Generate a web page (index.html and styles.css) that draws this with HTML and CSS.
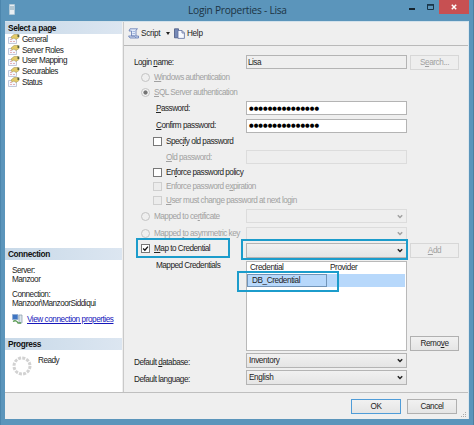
FILE: index.html
```html
<!DOCTYPE html>
<html lang="en">
<head>
<meta charset="utf-8">
<title>Login Properties - Lisa</title>
<link rel="stylesheet" href="styles.css">
</head>
<body>
<svg class="defs" width="0" height="0">
  <symbol id="page" viewBox="0 0 12 10"><path d="M.5 3.500h8v6h-8z" fill="#f5f8ff" stroke="#b4bbd2" stroke-width=".8"/><path d="M2 5.500h2M2 7.500h2M5 7.500h2" stroke="#dfa0a2" stroke-width=".8"/><path d="M3 3l3-2.500h4l1 3-3 2-2-1.500-2 1z" fill="#e3cb68" stroke="#9c8a48" stroke-width=".5"/><path d="M9.500 .5h1.800v2.500H9.500z" fill="#55603f"/></symbol>
  <symbol id="chev" viewBox="0 0 6 5"><path d="M.8 1.200L3 3.500 5.200 1.200" fill="none" stroke="currentColor" stroke-width="1.500"/></symbol>
</svg>
<div class="window">
  <header class="titlebar">
    <svg class="server" viewBox="0 0 6 11"><path d="M.5.5h5v10h-5z" fill="#e9eef2" stroke="#b8cbd8" stroke-width=".7"/><path d="M1 3h4M1 5h4" stroke="#7da1b5"/></svg>
    <h1>Login Properties - Lisa</h1>
    <svg class="min" viewBox="0 0 6 2"><path d="M0 1h6" stroke="#15242e" stroke-width="2"/></svg>
    <svg class="max" viewBox="0 0 7 6"><path d="M.5 1h6v4.500h-6z" fill="none" stroke="#183447"/><path d="M0 .8h7" stroke="#183447" stroke-width="1.500"/></svg>
    <div class="close"><svg viewBox="0 0 6 6"><path d="M.8.8l4.400 4.400M5.200.8L.8 5.200" stroke="#fff" stroke-width="1.500"/></svg></div>
  </header>
  <div class="client">
    <div class="body">
      <aside>
        <h2>Select a page</h2>
        <ul class="pages">
          <li><svg><use href="#page"/></svg><span>General</span></li>
          <li><svg><use href="#page"/></svg><span>Server Roles</span></li>
          <li><svg><use href="#page"/></svg><span>User Mapping</span></li>
          <li><svg><use href="#page"/></svg><span>Securables</span></li>
          <li><svg><use href="#page"/></svg><span>Status</span></li>
        </ul>
        <h2>Connection</h2>
        <div class="connection">
          <p>Server:<br>Manzoor</p>
          <p>Connection:<br><span class="account">Manzoor\ManzoorSiddiqui</span></p>
          <div class="link"><svg viewBox="0 0 11 10"><path d="M.5.5h5.500v5H.5z" fill="#3e75c3" stroke="#91aed4"/><path d="M7 1h3v8H7z" fill="#dce6ed" stroke="#8499a8" stroke-width=".7"/><path d="M1 7.500q3-2 5 1.500h3" fill="none" stroke="#5b9b55" stroke-width="1.300"/></svg><a>View connection properties</a></div>
        </div>
        <h2>Progress</h2>
        <div class="progress"><svg viewBox="0 0 20 20"><circle cx="10" cy="10" r="8" fill="none" stroke="#d2d2d2" stroke-width="3" stroke-dasharray="3 1.190"/></svg><span>Ready</span></div>
      </aside>
      <main>
        <div class="toolbar">
          <svg class="script" viewBox="0 0 11 11"><path d="M2 .8h7.500L8 2v6H3.500V3H1z" fill="#e4edfb" stroke="#6279b2" stroke-width=".8"/><path d="M.5 8h6l1.500 2h2.500V8H8M.5 8l1.500 2h6" fill="#c9d9f2" stroke="#6279b2" stroke-width=".8"/><path d="M4.500 3.500h2.500M4.500 5.500h2.500" stroke="#8ba4d5" stroke-width=".7"/></svg>
          <span class="t-script">Script</span><i class="caret"></i>
          <svg class="help" viewBox="0 0 11 11"><path d="M.5.800h4v9h-4z" fill="#7589b7" stroke="#475782" stroke-width=".8"/><path d="M4 2.500h4l2.400 2.400v5.500H4z" fill="#f7f9ff" stroke="#6070a0" stroke-width=".8"/><path d="M8 2.500V5h2.400" fill="none" stroke="#6070a0" stroke-width=".8"/></svg>
          <span>Help</span>
        </div>
        <form>
          <div class="row r-login"><label>Login <u>n</u>ame:</label><div class="field readonly">Lisa</div><div class="button off">S<u>e</u>arch...</div></div>
          <div class="row r-win off"><label class="in1"><i class="radio"></i><span><u>W</u>indows authentication</span></label></div>
          <div class="row r-sql off"><label class="in1"><i class="radio on"></i><span><u>S</u>QL Server authentication</span></label></div>
          <div class="row r-pass"><label class="in2"><u>P</u>assword:</label><div class="field dots">●●●●●●●●●●●●●●●</div></div>
          <div class="row r-confirm"><label class="in2"><u>C</u>onfirm password:</label><div class="field dots">●●●●●●●●●●●●●●●</div></div>
          <div class="row r-spec"><label class="in2c"><i class="check"></i><span>Spec<u>i</u>fy old password</span></label></div>
          <div class="row r-old off"><label class="in3"><u>O</u>ld password:</label><div class="field ghost"></div></div>
          <div class="row r-enf"><label class="in2c"><i class="check"></i><span>En<u>f</u>orce password policy</span></label></div>
          <div class="row r-exp off"><label class="in2c"><i class="check"></i><span>Enforce password e<u>x</u>piration</span></label></div>
          <div class="row r-must off"><label class="in2c"><i class="check"></i><span><u>U</u>ser must change password at next login</span></label></div>
          <div class="row r-cert off"><label class="in1"><i class="radio"></i><span>Mapped to ce<u>r</u>tificate</span></label><div class="field ghost"><svg><use href="#chev"/></svg></div></div>
          <div class="row r-asym off"><label class="in1"><i class="radio"></i><span>Mapped <u>t</u>o asymmetric key</span></label><div class="field ghost"><svg><use href="#chev"/></svg></div></div>
          <div class="row r-map"><label class="in1"><i class="check"><svg viewBox="0 0 8 8"><path d="M1.300 4l2 2L6.800 1.800" fill="none" stroke="#111" stroke-width="1.500"/></svg></i><span><u>M</u>ap to Credential</span></label><div class="field select"><svg><use href="#chev"/></svg></div><div class="button off"><u>A</u>dd</div>
            <b class="mark mark-map"></b><b class="mark mark-select"></b></div>
          <div class="row r-list"><label class="in2">Mapped Credentials</label>
            <div class="list"><div class="head"><span>Credential</span><span>Provider</span></div><div class="sel"><span>DB_Credential</span></div><b class="mark mark-cred"></b></div>
            <div class="button">Remo<u>v</u>e</div></div>
          <div class="row r-db"><label>Default <u>d</u>atabase:</label><div class="field select">Inventory<svg><use href="#chev"/></svg></div></div>
          <div class="row r-lang"><label>Default lan<u>g</u>uage:</label><div class="field select">English<svg><use href="#chev"/></svg></div></div>
        </form>
      </main>
    </div>
    <footer><div class="button ok">OK</div><div class="button">Cancel</div><svg class="grip" viewBox="0 0 6 6"><path d="M4 0h1v1H4zM2 2h1v1H2zM4 2h1v1H4zM0 4h1v1H0zM2 4h1v1H2zM4 4h1v1H4z" fill="#aaa"/></svg></footer>
  </div>
</div>
</body>
</html>
```
FILE: styles.css
```css
* { box-sizing: border-box; }
body { margin: 0; width: 474px; height: 425px; overflow: hidden; font: 8.2px/9px "Liberation Sans", sans-serif; letter-spacing: -.5px; color: #242424; }
svg { display: block; flex: none; }
.defs { position: absolute; }
.window { height: 425px; padding: 0 5px 6px; background: #5b95bb; display: flex; flex-direction: column; box-shadow: inset 1px 0 #4c86ad, inset -1px 0 #4c7f9f; }
.titlebar { height: 21px; flex: none; display: flex; position: relative; }
.server { width: 6px; height: 11px; margin: 4px 0 0 4px; }
h1 { margin: 4px 0 0 173px; width: 98px; font: 10.200px/13px "Open Sans", sans-serif; letter-spacing: -.26px; white-space: nowrap; color: #1c3443; }
.min { width: 6px; height: 2px; margin: 8px 0 0 123px; }
.max { width: 7px; height: 6px; margin: 4px 0 0 12px; }
.close { width: 30px; height: 14px; margin-left: auto; background: #c75052; display: flex; align-items: center; justify-content: center; }
.close svg { width: 6px; height: 6px; }
.client { flex: 1; background: #efefef; display: flex; flex-direction: column; border-top: 1px solid #d2e1eb; border-right: 1px solid #dce7ee; }
.body { height: 371px; display: flex; border-bottom: 1px solid #bfbfbf; }
aside { width: 117px; background: #fff; display: flex; flex-direction: column; }
h2 { height: 12px; flex: none; margin: 0; padding-left: 3px; background: linear-gradient(90deg, #c8d9e8, #dce6f1); font-size: 8.300px; line-height: 12px; letter-spacing: -.38px; color: #111; }
.pages { height: 214px; margin: 0; padding: 0; list-style: none; }
.pages li { height: 10.750px; display: flex; align-items: center; }
.pages svg { width: 12px; height: 10px; margin: 0 2px 0 3px; }
.connection { height: 78px; padding: 6px 0 0 7px; }
.connection p { margin: 0 0 6px; }
.account { letter-spacing: -.5px; }
.link { display: flex; align-items: center; }
.link svg { width: 11px; height: 10px; margin-right: 4px; }
.link a { color: #1717bb; text-decoration: underline; white-space: nowrap; letter-spacing: -.45px; }
.progress { display: flex; padding: 6px 0 0 7px; }
.progress svg { width: 20px; height: 20px; margin-right: 6px; }
main { border-left: 1px solid #c9c9c9; margin-left: 1px; flex: 1; }
.toolbar { height: 24px; display: flex; align-items: center; padding-left: 4px; border-bottom: 1px solid #b9b9b9; }
.toolbar svg { width: 11px; height: 11px; margin-right: 2px; }
.toolbar span { letter-spacing: -.3px; }
.t-script { width: 25px; }
.caret { border: 2.500px solid transparent; border-top: 3px solid #222; border-bottom: 0; margin-right: 4px; }
form { padding-top: 8px; }
.row { display: flex; align-items: center; position: relative; padding-left: 10px; height: 17px; }
.off, .button.off { color: #a1a1a1; }
label { width: 112px; flex: none; display: flex; align-items: center; white-space: pre; }
.in1 { padding-left: 7px; }
.in2 { padding-left: 22px; }
.in2c { padding-left: 19px; }
.in3 { padding-left: 32px; }
u { text-decoration-thickness: 1px; text-underline-offset: 1px; }
.radio { width: 9px; height: 9px; margin-right: 4px; border: 1px solid #c3c3c3; border-radius: 50%; flex: none; }
.radio.on { background: radial-gradient(circle, #747474 35%, #f4f4f4 50%); }
.check { width: 9px; height: 9px; margin-right: 4px; border: 1px solid #777; background: #fff; flex: none; }
.check svg { width: 7px; height: 7px; }
.off .check { border-color: #cfcfcf; background: #ececec; }
.field { width: 161px; height: 14px; flex: none; padding: 0 3px; border: 1px solid #b4b4b4; background: #fff; display: flex; align-items: center; }
.field svg { width: 6px; height: 5px; margin-left: auto; }
.readonly { background: #efefef; padding-left: 1px; }
.ghost { background: #eee; border-color: #dcdcdc; }
.select { height: 15px; background: linear-gradient(#f1f1f1, #e5e5e5); padding-left: 2px; letter-spacing: -.35px; }
.dots { font: 5.300px/9px "DejaVu Sans", sans-serif; letter-spacing: .05px; padding-left: 2px; color: #000; }
.button { width: 49px; height: 15px; flex: none; margin-left: 3px; border: 1px solid #b0b0b0; background: linear-gradient(#f1f1f1, #e5e5e5); display: flex; align-items: center; justify-content: center; white-space: pre; letter-spacing: -.4px; }
.button.off { border-color: #d7d7d7; background: #eee; }
.r-login { height: 16px; }
.r-win { height: 15px; }
.r-sql, .r-spec, .r-exp, .r-must { height: 14px; }
.r-pass, .r-old, .r-cert { height: 18px; }
.r-enf { height: 13px; }
.r-map label { margin-top: -4px; }
.r-list { height: 93px; align-items: flex-start; }
.r-list label { padding-top: 2px; }
.r-list .button { align-self: flex-end; margin-bottom: 1px; }
.r-db label, .r-lang label { padding-top: 4px; }
.list { width: 161px; height: 90px; flex: none; margin-top: 2px; border: 1px solid #b9b9b9; background: #fff; position: relative; }
.head { height: 12px; display: flex; padding: 1px 0 0 3px; letter-spacing: -.38px; }
.head span:first-child { width: 80px; }
.sel { height: 13px; display: flex; background: #b7d8fb; margin-right: 1px; }
.sel span { width: 80px; border: 1px solid #7194b8; padding-left: 4px; line-height: 11px; letter-spacing: -.4px; }
.mark { position: absolute; border: 2px solid #1c9ccb; z-index: 2; }
.mark-map { left: 12px; top: -4px; width: 94px; height: 20px; }
.mark-select { left: 117px; top: -3px; width: 167px; height: 21px; }
.mark-cred { left: -10px; top: 9px; width: 102px; height: 21px; }
footer { flex: 1; display: flex; padding: 6px 0 0 346px; position: relative; }
footer .button { width: 50px; margin: 0 6px 0 0; }
footer .ok { border: 1px solid #4f9cd8; }
.grip { position: absolute; right: 1px; bottom: 1px; width: 6px; height: 6px; }
```
